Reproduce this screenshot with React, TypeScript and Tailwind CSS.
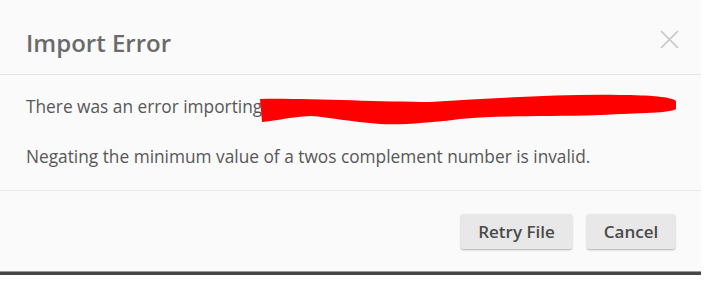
import React from "react";

export default function App() {
  return (
    <div className="w-[716px] h-[281px] bg-white overflow-hidden" style={{ fontFamily: '"Open Sans", "Noto Sans", sans-serif' }}>
      <div className="w-[701px] h-[271px] bg-[#fafafa] flex flex-col">
        <div className="h-[75px] flex items-start justify-between pl-[26px] pr-[22px] pt-[27px] border-b border-[#e6e6e6]">
          <h1 className="text-[24px] leading-[32px] font-semibold text-[#6a6a6a]">Import Error</h1>
          <svg width="19" height="19" viewBox="0 0 19 19" className="mt-[3px]">
            <path d="M1 1L18 18M18 1L1 18" stroke="#c6c6c6" strokeWidth="1.7" fill="none" />
          </svg>
        </div>
        <div className="relative h-[116px] pl-[26px] pt-[20px] border-b border-[#ebebeb] text-[17.3px] leading-[24px] text-[#575757]">
          <p>There was an error importing</p>
          <p className="mt-[26px]">Negating the minimum value of a twos complement number is invalid.</p>
          <svg width="701" height="60" viewBox="0 70 701 60" className="absolute left-0 top-0">
            <path
              d="M260 100 C300 99 380 103 430 103 C500 99 560 95 620 96 C650 96 672 98 676 102 L676 110 C672 114 640 114 600 116 C540 118 500 116 460 120 C430 124 400 126 380 125 C350 123 330 118 310 117 C290 118 275 122 262 123 Z"
              fill="#ff0000"
              transform="translate(0 -6)"
            />
          </svg>
        </div>
        <div className="flex-1 flex justify-end items-start gap-[15px] pt-[23px] pr-[26px]">
          <button className="w-[111px] h-[35px] rounded-[2px] bg-[#e8e8e8] text-[17px] font-semibold text-[#4a4a4a] shadow-[0_1px_2px_rgba(0,0,0,0.3)]">
            Retry File
          </button>
          <button className="w-[88px] h-[35px] rounded-[2px] bg-[#e8e8e8] text-[17px] font-semibold text-[#4a4a4a] shadow-[0_1px_2px_rgba(0,0,0,0.3)]">
            Cancel
          </button>
        </div>
      </div>
      <div className="w-[701px] h-[1px] bg-[#9a9a9a]" />
      <div className="w-[701px] h-[3px] bg-[#474747]" />
    </div>
  );
}
